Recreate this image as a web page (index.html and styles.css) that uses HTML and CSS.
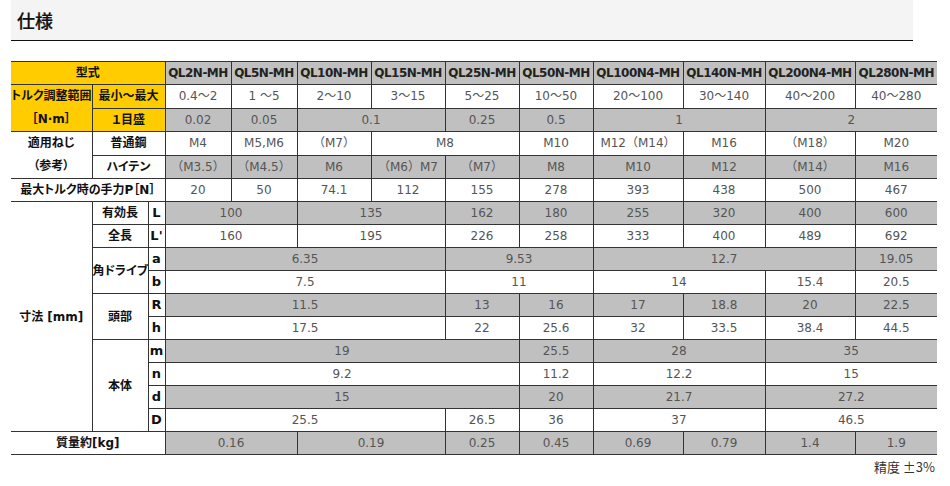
FILE: index.html
```html
<!DOCTYPE html>
<html lang="ja">
<head>
<meta charset="utf-8">
<title>仕様</title>
<link rel="stylesheet" href="styles.css">
</head>
<body>
<div class="page">
  <div class="title-box"><h2 class="title">仕様</h2></div>
  <table class="spec">
    <colgroup>
      <col style="width:81px"><col style="width:56px"><col style="width:17px">
      <col style="width:66px"><col style="width:66px"><col style="width:74px"><col style="width:74px">
      <col style="width:74px"><col style="width:74px"><col style="width:90px"><col style="width:82px">
      <col style="width:90px"><col style="width:82px">
    </colgroup>
    <tr>
      <th class="y first" colspan="3">型式</th>
      <th class="m">QL2N-MH</th><th class="m">QL5N-MH</th><th class="m">QL10N-MH</th><th class="m">QL15N-MH</th>
      <th class="m">QL25N-MH</th><th class="m">QL50N-MH</th><th class="m">QL100N4-MH</th><th class="m">QL140N-MH</th>
      <th class="m">QL200N4-MH</th><th class="m">QL280N-MH</th>
    </tr>
    <tr>
      <th class="y first two" rowspan="2">トルク調整範囲<br>［N·m］</th>
      <th class="y" colspan="2">最小〜最大</th>
      <td>0.4〜2</td><td>1 〜5</td><td>2〜10</td><td>3〜15</td><td>5〜25</td><td>10〜50</td><td>20〜100</td><td>30〜140</td><td>40〜200</td><td>40〜280</td>
    </tr>
    <tr class="g">
      <th class="y" colspan="2">１目盛</th>
      <td>0.02</td><td>0.05</td><td colspan="2">0.1</td><td>0.25</td><td>0.5</td><td colspan="2">1</td><td colspan="2">2</td>
    </tr>
    <tr>
      <th class="first two" rowspan="2">適用ねじ<br>（参考）</th>
      <th colspan="2">普通鋼</th>
      <td>M4</td><td>M5,M6</td><td>（M7）</td><td colspan="2">M8</td><td>M10</td><td>M12（M14）</td><td>M16</td><td>（M18）</td><td>M20</td>
    </tr>
    <tr class="g">
      <th colspan="2">ハイテン</th>
      <td>（M3.5）</td><td>（M4.5）</td><td>M6</td><td>（M6）M7</td><td>（M7）</td><td>M8</td><td>M10</td><td>M12</td><td>（M14）</td><td>M16</td>
    </tr>
    <tr>
      <th class="first" colspan="3">最大トルク時の手力P［N］</th>
      <td>20</td><td>50</td><td>74.1</td><td>112</td><td>155</td><td>278</td><td>393</td><td>438</td><td>500</td><td>467</td>
    </tr>
    <tr class="g">
      <th class="first" rowspan="10">寸法 [mm]</th>
      <th>有効長</th><th class="k">L</th>
      <td colspan="2">100</td><td colspan="2">135</td><td>162</td><td>180</td><td>255</td><td>320</td><td>400</td><td>600</td>
    </tr>
    <tr>
      <th>全長</th><th class="k">L'</th>
      <td colspan="2">160</td><td colspan="2">195</td><td>226</td><td>258</td><td>333</td><td>400</td><td>489</td><td>692</td>
    </tr>
    <tr class="g">
      <th rowspan="2">角ドライブ</th><th class="k">a</th>
      <td colspan="4">6.35</td><td colspan="2">9.53</td><td colspan="3">12.7</td><td>19.05</td>
    </tr>
    <tr>
      <th class="k">b</th>
      <td colspan="4">7.5</td><td colspan="2">11</td><td colspan="2">14</td><td>15.4</td><td>20.5</td>
    </tr>
    <tr class="g">
      <th rowspan="2">頭部</th><th class="k">R</th>
      <td colspan="4">11.5</td><td>13</td><td>16</td><td>17</td><td>18.8</td><td>20</td><td>22.5</td>
    </tr>
    <tr>
      <th class="k">h</th>
      <td colspan="4">17.5</td><td>22</td><td>25.6</td><td>32</td><td>33.5</td><td>38.4</td><td>44.5</td>
    </tr>
    <tr class="g">
      <th rowspan="4">本体</th><th class="k">m</th>
      <td colspan="5">19</td><td>25.5</td><td colspan="2">28</td><td colspan="2">35</td>
    </tr>
    <tr>
      <th class="k">n</th>
      <td colspan="5">9.2</td><td>11.2</td><td colspan="2">12.2</td><td colspan="2">15</td>
    </tr>
    <tr class="g">
      <th class="k">d</th>
      <td colspan="5">15</td><td>20</td><td colspan="2">21.7</td><td colspan="2">27.2</td>
    </tr>
    <tr>
      <th class="k">D</th>
      <td colspan="4">25.5</td><td>26.5</td><td>36</td><td colspan="2">37</td><td colspan="2">46.5</td>
    </tr>
    <tr class="g">
      <th class="first w" colspan="3">質量約[kg]</th>
      <td colspan="2">0.16</td><td colspan="2">0.19</td><td>0.25</td><td>0.45</td><td>0.69</td><td>0.79</td><td>1.4</td><td>1.9</td>
    </tr>
  </table>
  <p class="note">精度 ±3%</p>
</div>
</body>
</html>
```

FILE: styles.css
```css
html, body {
  margin: 0;
  padding: 0;
  background: #ffffff;
}
body {
  font-family: "DejaVu Sans", "Noto Sans CJK JP", sans-serif;
  color: #333333;
}
.page {
  padding-left: 11px;
  width: 926px;
}
.title-box {
  width: 902px;
  height: 40px;
  background: #f4f4f4;
  border-bottom: 1px solid #111111;
  display: flex;
  align-items: center;
}
.title {
  margin: 0 0 0 6px;
  font-family: "Noto Sans CJK JP", sans-serif;
  font-size: 18px;
  font-weight: 500;
  color: #111111;
  line-height: 1;
  -webkit-text-stroke: 0.2px #111111;
}
.spec {
  margin-top: 20px;
  width: 926px;
  table-layout: fixed;
  border-collapse: collapse;
  font-size: 12px;
}
.spec th, .spec td {
  border: 1px solid #333333;
  height: 22px;
  padding: 0;
  line-height: 22px;
  text-align: center;
  vertical-align: middle;
  white-space: nowrap;
  overflow: hidden;
}
.spec td {
  color: #555555;
  font-weight: normal;
}
.spec th {
  color: #111111;
  font-weight: bold;
  font-feature-settings: "palt";
  background: #ffffff;
}
.spec tr > :last-child {
  border-right: 0;
}
.spec .first {
  border-left: 0;
}
.spec tr.g td {
  background: #c0c0c0;
}
.spec th.y {
  background: #ffcc00;
}
.spec th.m {
  background: #c0c0c0;
  color: #222222;
  letter-spacing: -0.5px;
}
.spec th.two {
  line-height: 23px;
}
.spec th.k {
  font-size: 13px;
}
.note {
  margin: 2px 0 0;
  text-align: right;
  font-size: 13px;
  color: #333333;
  font-family: "Noto Sans CJK JP", sans-serif;
  padding-right: 2px;
  line-height: 20px;
}
```
